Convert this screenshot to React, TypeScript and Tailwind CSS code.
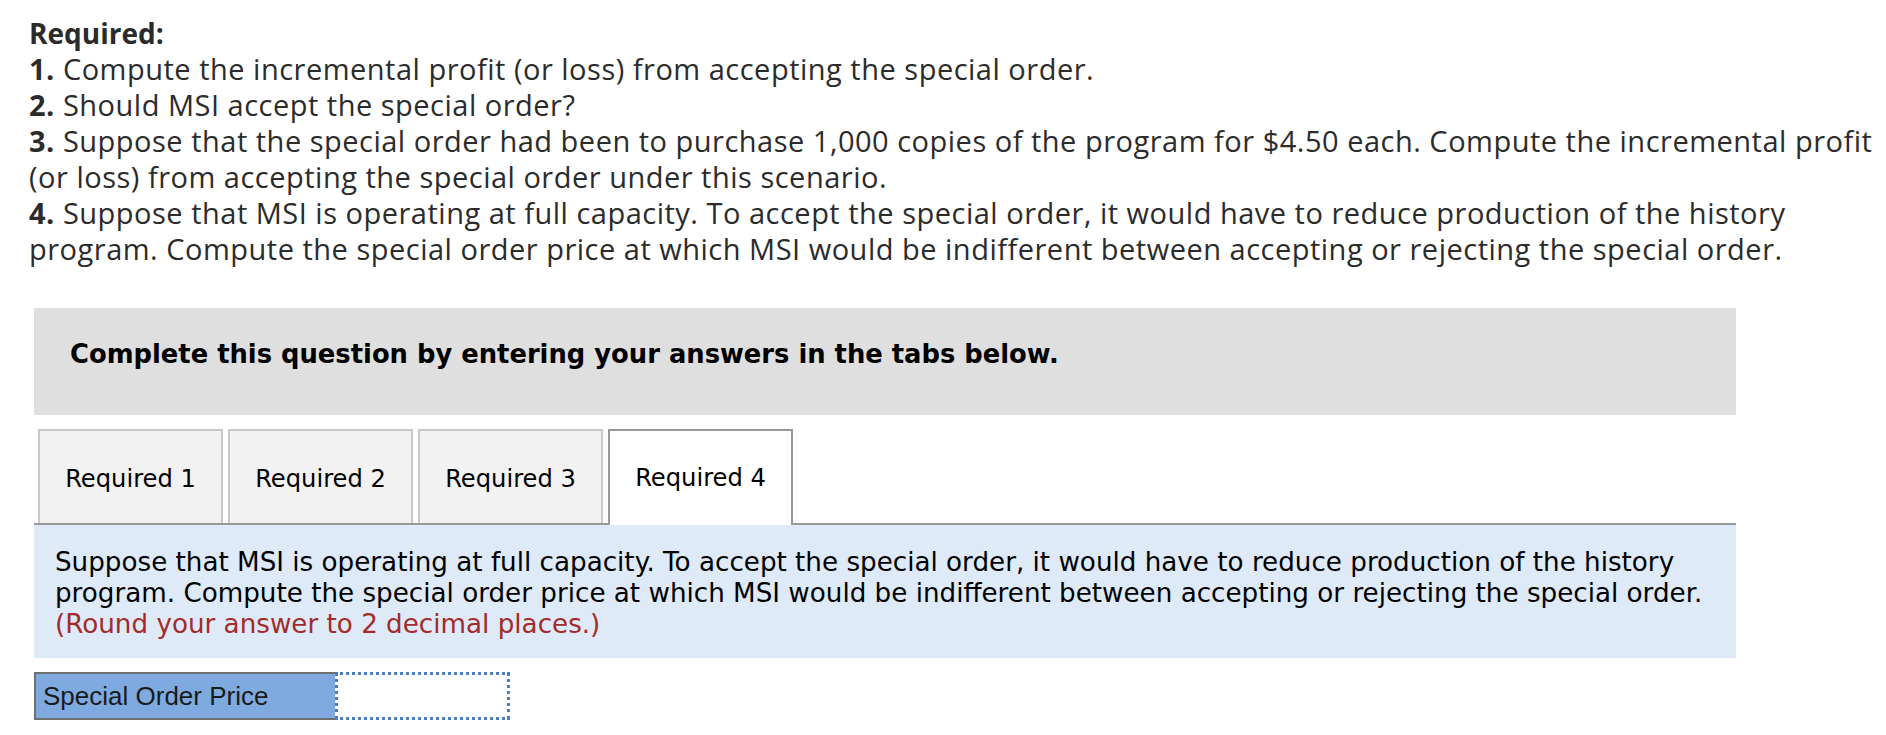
export default function App() {
  const tabs = ['Required 1', 'Required 2', 'Required 3', 'Required 4']
  const active = 3

  return (
    <div className="w-[1886px] h-[735px] overflow-hidden bg-white">
      <div className="pl-[29px] pt-[15px] text-[29px] tracking-[0.5px] leading-[36px] text-[#2b2b2b] font-['Open_Sans',sans-serif] whitespace-nowrap">
        <div className="font-bold text-[28px] tracking-normal">Required:</div>
        <div><b>1.</b> Compute the incremental profit (or loss) from accepting the special order.</div>
        <div><b>2.</b> Should MSI accept the special order?</div>
        <div><b>3.</b> Suppose that the special order had been to purchase 1,000 copies of the program for $4.50 each. Compute the incremental profit</div>
        <div>(or loss) from accepting the special order under this scenario.</div>
        <div><b>4.</b> Suppose that MSI is operating at full capacity. To accept the special order, it would have to reduce production of the history</div>
        <div>program. Compute the special order price at which MSI would be indifferent between accepting or rejecting the special order.</div>
      </div>

      <div className="ml-[34px] mt-[41px] w-[1702px] font-['DejaVu_Sans',Verdana,sans-serif]">
        <div className="h-[107px] bg-[#dfdfdf] pl-[36px] pt-[30px] text-[25.8px] leading-[32px] font-bold text-black whitespace-nowrap">
          Complete this question by entering your answers in the tabs below.
        </div>

        <div className="mt-[14px] flex items-end gap-[5px] pl-[4px] border-b-2 border-[#999]">
          {tabs.map((t, i) =>
            i === active ? (
              <div
                key={t}
                className="w-[185px] h-[96px] -mb-[2px] bg-white border-2 border-b-0 border-[#999] flex items-center justify-center text-[24.2px] text-black"
              >
                {t}
              </div>
            ) : (
              <div
                key={t}
                className="w-[185px] h-[94px] bg-[#f2f2f2] border-2 border-b-0 border-[#c8c8c8] flex items-center justify-center pt-[4px] text-[24.2px] text-black"
              >
                {t}
              </div>
            )
          )}
        </div>

        <div className="bg-[#deeaf8] pl-[21px] pt-[22px] pb-[18px] text-[26.2px] leading-[31px] text-black">
          <div className="whitespace-nowrap">
            Suppose that MSI is operating at full capacity. To accept the special order, it would have to reduce production of the history
          </div>
          <div className="whitespace-nowrap">
            program. Compute the special order price at which MSI would be indifferent between accepting or rejecting the special order.
          </div>
          <div className="text-[#a52a2a]">(Round your answer to 2 decimal places.)</div>
        </div>

        <div className="mt-[14px] flex h-[48px]">
          <div className="w-[301px] h-full bg-[#7eaadf] border-2 border-r-0 border-[#707070] flex items-center pl-[7px] text-[26px] text-[#1a1a1a] font-['Liberation_Sans',Arial,sans-serif]">
            Special Order Price
          </div>
          <div className="w-[175px] h-full bg-white border-[3px] border-dotted border-[#4a7ebf]" />
        </div>
      </div>
    </div>
  )
}
